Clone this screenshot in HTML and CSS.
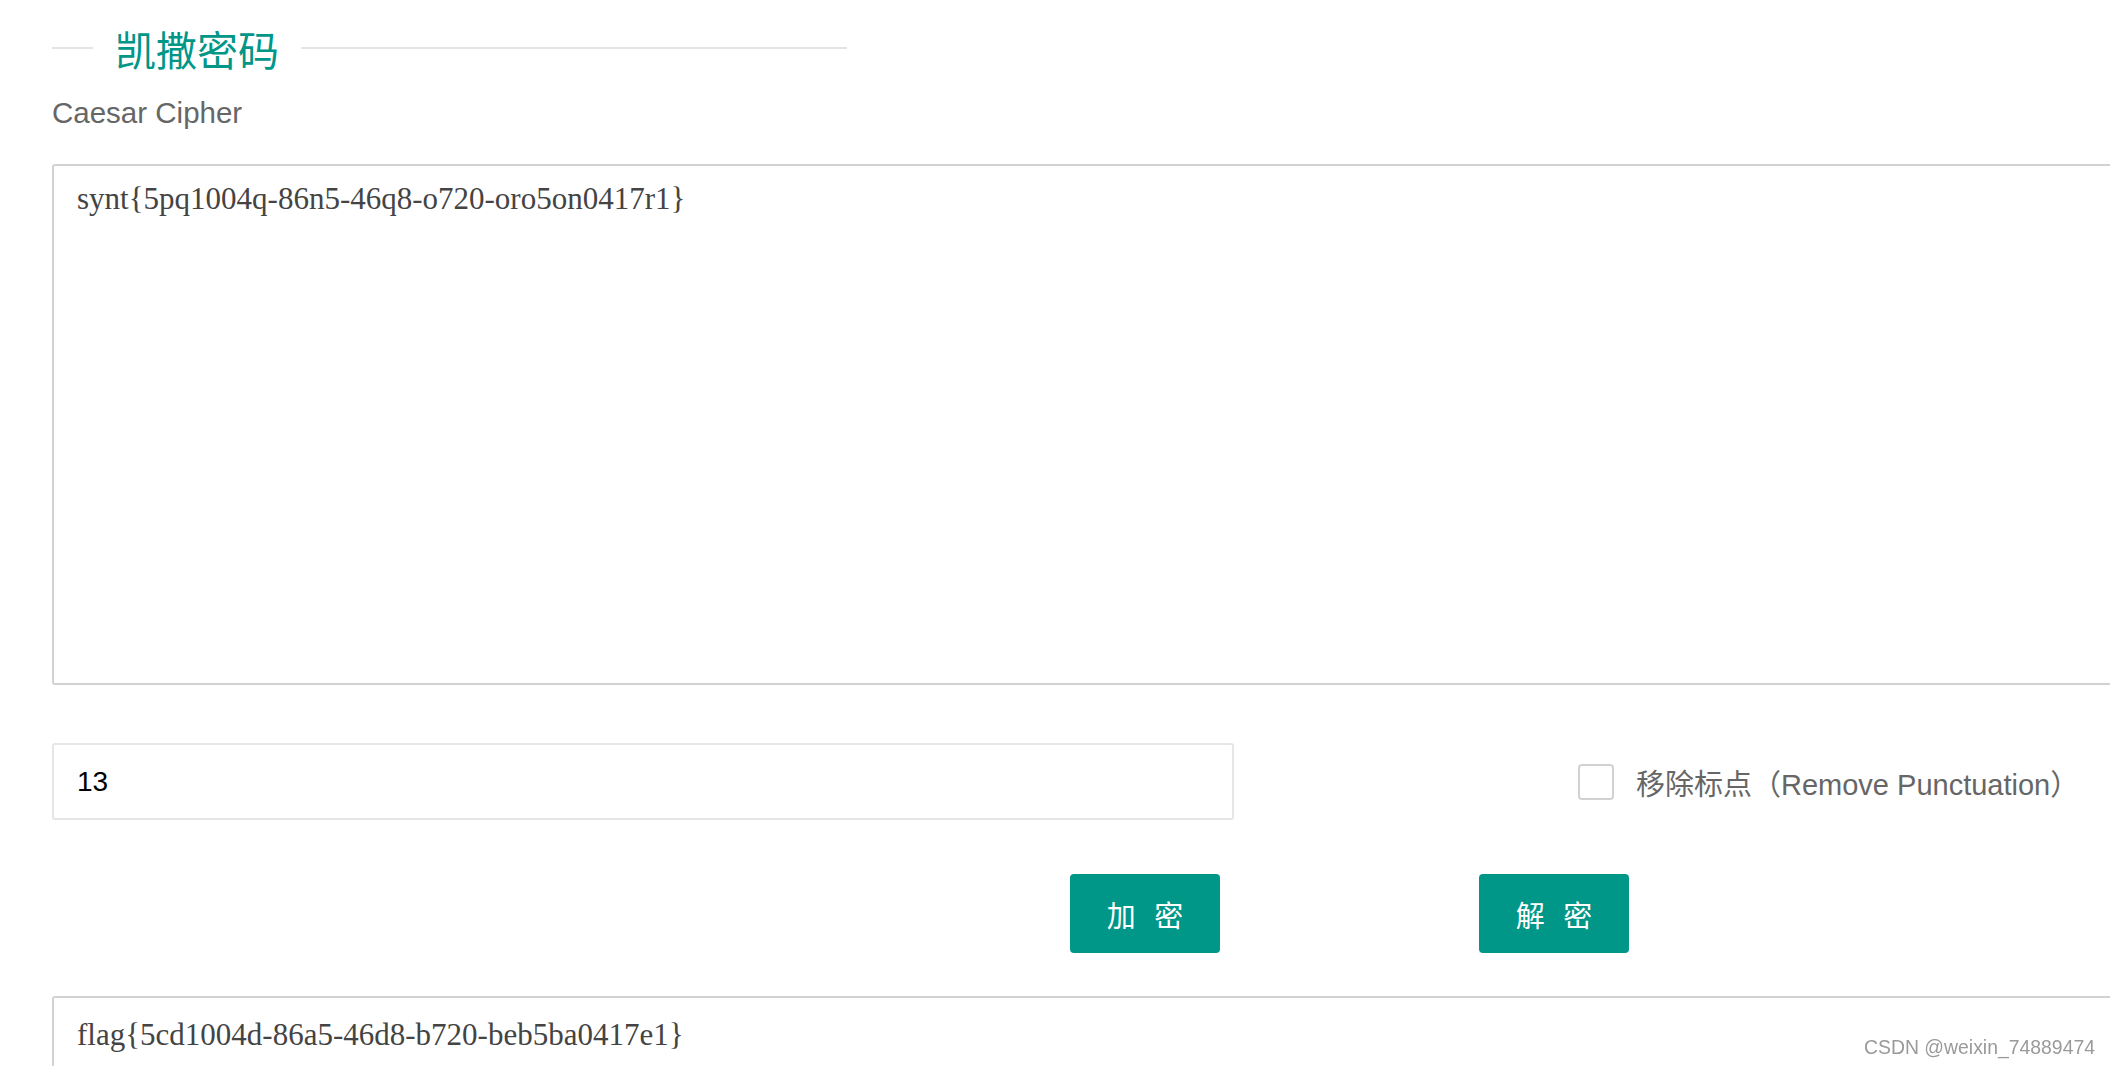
FILE: index.html
```html
<!DOCTYPE html>
<html lang="zh-CN">
<head>
<meta charset="utf-8">
<title>凯撒密码</title>
<link rel="stylesheet" href="styles.css">
</head>
<body>
<div class="page">
  <div class="field-title">
    <span class="rule rule-short"></span>
    <h1 class="title">凯撒密码</h1>
    <span class="rule rule-long"></span>
  </div>
  <p class="subtitle">Caesar Cipher</p>
  <textarea class="box box-input" spellcheck="false">synt{5pq1004q-86n5-46q8-o720-oro5on0417r1}</textarea>
  <div class="options">
    <input class="shift" type="text" value="13">
    <label class="check">
      <span class="checkbox"></span>
      <span class="check-text">移除标点（Remove Punctuation）</span>
    </label>
  </div>
  <div class="actions">
    <button class="btn" type="button">加 密</button>
    <button class="btn" type="button">解 密</button>
  </div>
  <textarea class="box box-output" spellcheck="false">flag{5cd1004d-86a5-46d8-b720-beb5ba0417e1}</textarea>
</div>
<div class="watermark">CSDN @weixin_74889474</div>
</body>
</html>
```
FILE: styles.css
```css
html, body {
  margin: 0;
  padding: 0;
  background: #fff;
  overflow: hidden;
  height: 100%;
}

body {
  font-family: "Liberation Sans", "Noto Sans CJK SC", sans-serif;
  color: #333;
}

.page {
  box-sizing: border-box;
  width: 100%;
  height: 100%;
  padding: 20px 0 0 52px;
  overflow: hidden;
}

.field-title {
  display: flex;
  align-items: center;
  width: 795px;
  height: 56px;
}

.rule {
  height: 2px;
  background: #e4e4e4;
}

.rule-short {
  width: 41px;
  flex: none;
}

.rule-long {
  flex: 1;
}

.title {
  margin: 0 22px;
  font-family: "Noto Sans CJK SC", sans-serif;
  font-size: 41px;
  font-weight: 400;
  line-height: 56px;
  color: #009688;
  white-space: nowrap;
}

.subtitle {
  margin: 17px 0 0;
  font-size: 29.5px;
  line-height: 40px;
  color: #666;
}

.box {
  display: block;
  box-sizing: border-box;
  width: 100%;
  margin: 0;
  border: 2px solid #d2d2d2;
  border-right: none;
  border-radius: 3px 0 0 3px;
  padding: 15px 23px;
  font-family: "Liberation Serif", serif;
  font-size: 31px;
  line-height: 36px;
  color: #444;
  background: #fff;
  resize: none;
  outline: none;
  overflow: hidden;
}

.box-input {
  margin-top: 31px;
  height: 521px;
}

.box-output {
  margin-top: 43px;
  height: 70px;
  padding-top: 19px;
  border-bottom: none;
  border-radius: 3px 0 0 0;
}

.options {
  display: flex;
  align-items: center;
  margin-top: 58px;
}

.shift {
  box-sizing: border-box;
  width: 1182px;
  height: 77px;
  margin: 0;
  border: 2px solid #e6e6e6;
  border-radius: 3px;
  padding: 0 23px;
  font-family: "Liberation Sans", sans-serif;
  font-size: 28px;
  color: #000;
  outline: none;
}

.check {
  display: flex;
  align-items: center;
  margin-left: 344px;
}

.checkbox {
  box-sizing: border-box;
  width: 36px;
  height: 36px;
  border: 2px solid #d2d2d2;
  border-radius: 4px;
  background: #fff;
}

.check-text {
  margin-left: 22px;
  font-size: 29px;
  color: #666;
  white-space: nowrap;
}

.actions {
  display: flex;
  gap: 259px;
  margin-top: 54px;
  padding-left: 1018px;
}

.btn {
  width: 150px;
  height: 79px;
  border: none;
  border-radius: 4px;
  background: #009688;
  color: #fff;
  font-family: "Noto Sans CJK SC", sans-serif;
  font-size: 29px;
  letter-spacing: 6px;
  text-indent: 6px;
  padding: 0;
  cursor: pointer;
}

.watermark {
  position: fixed;
  right: 15px;
  bottom: 6px;
  font-family: "Liberation Sans", sans-serif;
  font-size: 19.4px;
  line-height: 26px;
  color: #9a9a9a;
  text-shadow: 0 0 1px #fff;
}
```
